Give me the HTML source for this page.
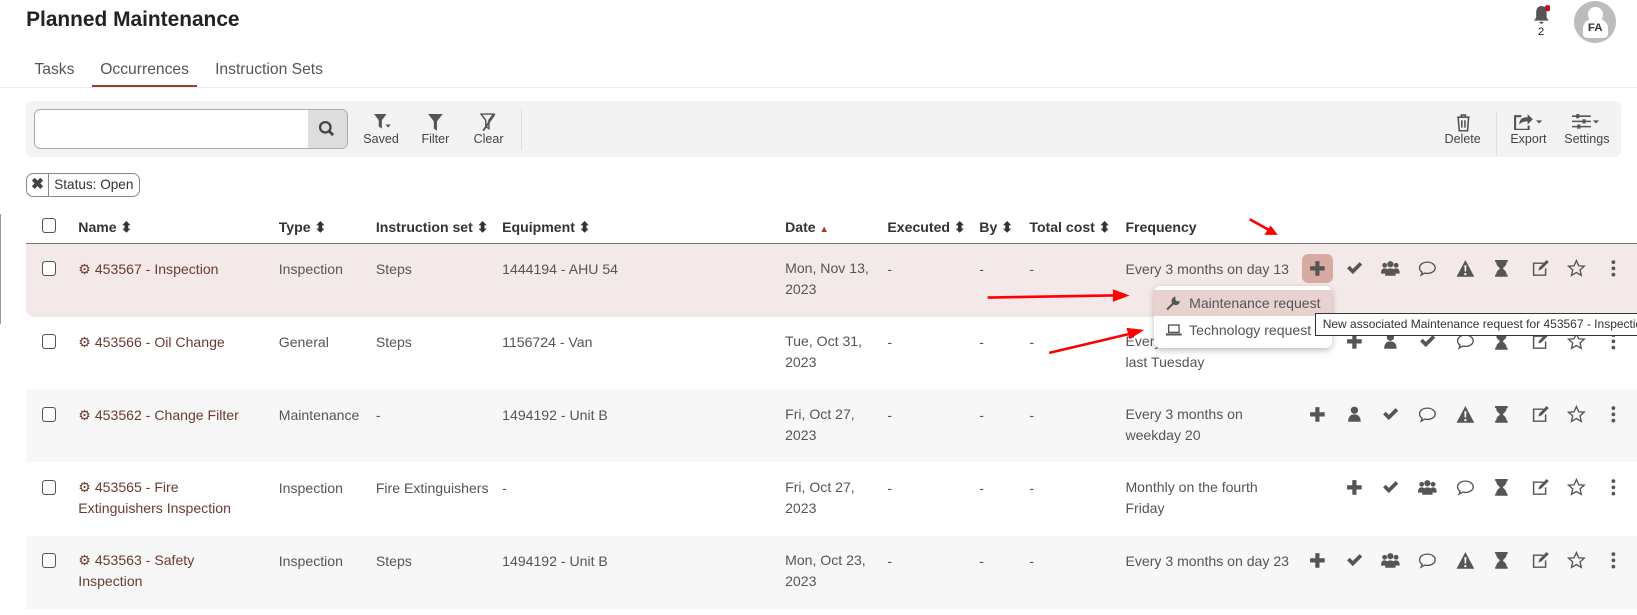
<!DOCTYPE html>
<html><head><meta charset="utf-8"><style>
html{zoom:1.04401}
body{margin:0;width:1568px;height:589px;overflow:hidden;background:#fff;font-family:"Liberation Sans",sans-serif;color:#555;position:relative;font-size:13.5px}
.a{position:absolute;white-space:nowrap}
.h{color:#333;font-weight:bold}
.n{color:#6a3b30}
.row{position:absolute;left:25px;width:1543px;height:70px}
.cb{position:absolute;width:12px;height:12px;border:1.5px solid #555;border-radius:3px;background:#fff}
.ic{position:absolute;width:18px;height:18px;fill:#555;stroke:none}
.tb{position:absolute;text-align:center;font-size:12px;color:#444}
.d{line-height:20px;white-space:normal;width:90px}
</style></head><body>
<div class="a" style="left:25px;top:8px;font-size:20px;font-weight:bold;color:#222">Planned Maintenance</div>
<svg class="ic" style="left:1467px;top:5px;width:18px;height:20px" viewBox="0 0 18 20"><path d="M9 1c-3 0-5 2.5-5 6v5l-2 3h14l-2-3V7c0-3.5-2-6-5-6zM7 16a2 2 0 004 0z" fill="#555"/><circle cx="15" cy="3" r="3" fill="#c0141c"/></svg>
<div class="a" style="left:1473px;top:25px;font-size:11px;color:#222">2</div>
<div class="a" style="left:1508px;top:1px;width:40px;height:40px;border-radius:50%;background:#bcbcbc;overflow:hidden"><div style="position:absolute;left:13px;top:6px;width:14px;height:14px;border-radius:50%;background:#fff"></div><div style="position:absolute;left:8px;top:17px;width:24px;height:18px;border-radius:9px 9px 4px 4px;background:#fff;font-size:11px;font-weight:bold;color:#333;text-align:center;line-height:18px">FA</div></div>
<div class="a" style="left:33px;top:58px;font-size:15px">Tasks</div>
<div class="a" style="left:96px;top:58px;font-size:15px">Occurrences</div>
<div class="a" style="left:206px;top:58px;font-size:15px">Instruction Sets</div>
<div class="a" style="left:0;top:83px;width:1568px;height:1px;background:#eee"></div>
<div class="a" style="left:88px;top:81px;width:101px;height:2px;background:#a33a2c"></div>
<div class="a" style="left:25px;top:97px;width:1528px;height:53px;background:#f3f3f3;border-radius:6px"></div>
<div class="a" style="left:33px;top:104px;width:298px;height:37px;border:1px solid #aaa;border-radius:6px;background:#fff;overflow:hidden"><div style="position:absolute;right:0;top:0;width:37px;height:37px;background:#ddd"><svg style="position:absolute;left:10px;top:10px" width="17" height="17" viewBox="0 0 17 17"><circle cx="7" cy="7" r="5" stroke="#444" stroke-width="2.2" fill="none"/><path d="M10.5 10.5l4 4" stroke="#444" stroke-width="2.6"/></svg></div></div>
<svg class="ic" style="left:357px;top:108px" viewBox="0 0 18 18"><path d="M1 1h12l-4.5 6v8l-3-2V7z"/><path d="M12 11h5l-2.5 3z"/></svg>
<div class="tb" style="left:345px;top:126px;width:40px">Saved</div>
<svg class="ic" style="left:408px;top:108px" viewBox="0 0 18 18"><path d="M2 1h14l-5.5 7v9l-3-2V8z"/></svg>
<div class="tb" style="left:397px;top:126px;width:40px">Filter</div>
<svg class="ic" style="left:459px;top:108px" viewBox="0 0 18 18"><path d="M2 1h12l-4.5 6v8l-3-2V7z" fill="none" stroke="#555" stroke-width="1.4"/><path d="M15 1L4 17" stroke="#555" stroke-width="1.8"/></svg>
<div class="tb" style="left:448px;top:126px;width:40px">Clear</div>
<div class="a" style="left:499px;top:104px;width:1px;height:40px;background:#ddd"></div>
<svg class="ic" style="left:1393px;top:108px" viewBox="0 0 18 18"><path d="M3 4h12M7 4V2h4v2M4 4l1 13h8l1-13M7.5 7v7M10.5 7v7" stroke="#555" stroke-width="1.5" fill="none"/></svg>
<div class="tb" style="left:1381px;top:126px;width:40px">Delete</div>
<div class="a" style="left:1433px;top:108px;width:1px;height:40px;background:#ddd"></div>
<svg class="ic" style="left:1449px;top:107px;width:30px" viewBox="0 0 30 18"><path d="M8 4H2v13h13v-4" stroke="#555" stroke-width="2" fill="none"/><path d="M6 12c0-5 3-7 8-7V2l5 5-5 5V9c-4 0-6 1-8 3z"/><path d="M22 8h6l-3 3z"/></svg>
<div class="tb" style="left:1444px;top:126px;width:40px">Export</div>
<svg class="ic" style="left:1505px;top:107px;width:30px" viewBox="0 0 30 18"><path d="M1 4h18M1 9h18M1 14h18" stroke="#555" stroke-width="1.5"/><rect x="5" y="2" width="3" height="4"/><rect x="11" y="7" width="3" height="4"/><rect x="6" y="12" width="3" height="4"/><path d="M21 8h6l-3 3z"/></svg>
<div class="tb" style="left:1495px;top:126px;width:50px">Settings</div>
<div class="a" style="left:25px;top:166px;width:107px;height:21px;border:1px solid #888;border-radius:7px;background:#fff"><div style="position:absolute;left:0;top:0;width:20px;height:21px;border-right:1px solid #888;text-align:center;font-weight:bold;color:#444;line-height:21px;font-size:15px">✖</div><div style="position:absolute;left:26px;top:3px;font-size:13px;color:#333">Status: Open</div></div>
<div class="a" style="left:0;top:205px;width:1px;height:105px;background:#999"></div>
<div class="cb" style="left:40px;top:209px"></div>
<div class="a h" style="left:75px;top:210px">Name ⬍</div>
<div class="a h" style="left:267px;top:210px">Type ⬍</div>
<div class="a h" style="left:360px;top:210px">Instruction set ⬍</div>
<div class="a h" style="left:481px;top:210px">Equipment ⬍</div>
<div class="a h" style="left:752px;top:210px">Date <span style="color:#a33a2c;font-size:9px">▲</span></div>
<div class="a h" style="left:850px;top:210px">Executed ⬍</div>
<div class="a h" style="left:938px;top:210px">By ⬍</div>
<div class="a h" style="left:986px;top:210px">Total cost ⬍</div>
<div class="a h" style="left:1078px;top:210px">Frequency</div>
<div class="a" style="left:25px;top:233px;width:1543px;height:1px;background:#777"></div>
<div class="row" style="top:234px;background:#f4e9e9;border-radius:0 0 0 8px"></div>
<div class="row" style="top:373px;background:#f7f7f7"></div>
<div class="row" style="top:513px;background:#f7f7f7"></div>
<div class="a" style="left:1247px;top:243px;width:30px;height:28px;border-radius:6px;background:#d7aaa4"></div>
<svg width="0" height="0" style="position:absolute"><defs>
<symbol id="plus" viewBox="0 0 18 18"><path d="M7 2h4v5h5v4h-5v5H7v-5H2V7h5z"/></symbol>
<symbol id="chk" viewBox="0 0 18 18"><path d="M2 9l2.5-2.5L7.5 9.5 14 3l2.5 2.5-9 9z"/></symbol>
<symbol id="grp" viewBox="0 0 18 18"><circle cx="9" cy="5" r="3"/><circle cx="3.5" cy="6" r="2.3"/><circle cx="14.5" cy="6" r="2.3"/><path d="M4 16c0-5 2-7 5-7s5 2 5 7z"/><path d="M0 14c0-4 1.5-5 3.5-5s2.5 1 2.5 1-1 2-1 4zM18 14c0-4-1.5-5-3.5-5S12 10 12 10s1 2 1 4z"/></symbol>
<symbol id="usr" viewBox="0 0 18 18"><circle cx="9" cy="5" r="3.5"/><path d="M3 16c0-5 2.5-7 6-7s6 2 6 7z"/></symbol>
<symbol id="cmt" viewBox="0 0 18 18"><path d="M9 3C4.5 3 1.5 5.5 1.5 8.5c0 1.7 1 3.2 2.5 4.2L3 15.5l3.5-2c.8.2 1.6.3 2.5.3 4.5 0 7.5-2.5 7.5-5.3S13.5 3 9 3z" fill="none" stroke="#555" stroke-width="1.3"/></symbol>
<symbol id="wrn" viewBox="0 0 18 18"><path d="M9 1l8.5 16H.5z"/><path d="M8 6h2l-.3 6H8.3zM8 13.5h2v2H8z" fill="#fff"/></symbol>
<symbol id="hg" viewBox="0 0 18 18"><path d="M3 1h12v2h-1c0 4-3.5 5-3.5 6s3.5 2 3.5 6h1v2H3v-2h1c0-4 3.5-5 3.5-6S4 7 4 3H3z"/></symbol>
<symbol id="edt" viewBox="0 0 18 18"><path d="M12 4H2.5v11.5H14V9" fill="none" stroke="#555" stroke-width="1.4"/><path d="M7 11l1-3 7-7 2 2-7 7z"/></symbol>
<symbol id="str" viewBox="0 0 18 18"><path d="M9 1.5l2.2 5 5.3.4-4 3.5 1.2 5.3L9 13l-4.7 2.7 1.2-5.3-4-3.5 5.3-.4z" fill="none" stroke="#555" stroke-width="1.3"/></symbol>
<symbol id="dot" viewBox="0 0 18 18"><circle cx="9" cy="3" r="1.8"/><circle cx="9" cy="9" r="1.8"/><circle cx="9" cy="15" r="1.8"/></symbol>
</defs></svg>
<!-- rows -->
<div class="cb" style="left:40px;top:250px"></div>
<div class="a n" style="left:75px;top:250px">⚙ 453567 - Inspection</div>
<div class="a" style="left:267px;top:250px">Inspection</div><div class="a" style="left:360px;top:250px">Steps</div><div class="a" style="left:481px;top:250px">1444194 - AHU 54</div>
<div class="a d" style="left:752px;top:247px">Mon, Nov 13, 2023</div>
<div class="a" style="left:850px;top:250px">-</div><div class="a" style="left:938px;top:250px">-</div><div class="a" style="left:986px;top:250px">-</div>
<div class="a" style="left:1078px;top:250px">Every 3 months on day 13</div>

<div class="cb" style="left:40px;top:320px"></div>
<div class="a n" style="left:75px;top:320px">⚙ 453566 - Oil Change</div>
<div class="a" style="left:267px;top:320px">General</div><div class="a" style="left:360px;top:320px">Steps</div><div class="a" style="left:481px;top:320px">1156724 - Van</div>
<div class="a d" style="left:752px;top:317px">Tue, Oct 31, 2023</div>
<div class="a" style="left:850px;top:320px">-</div><div class="a" style="left:938px;top:320px">-</div><div class="a" style="left:986px;top:320px">-</div>
<div class="a" style="left:1078px;top:317px;line-height:20px">Every 3 months on the<br>last Tuesday</div>

<div class="cb" style="left:40px;top:390px"></div>
<div class="a n" style="left:75px;top:390px">⚙ 453562 - Change Filter</div>
<div class="a" style="left:267px;top:390px">Maintenance</div><div class="a" style="left:360px;top:390px">-</div><div class="a" style="left:481px;top:390px">1494192 - Unit B</div>
<div class="a d" style="left:752px;top:387px">Fri, Oct 27, 2023</div>
<div class="a" style="left:850px;top:390px">-</div><div class="a" style="left:938px;top:390px">-</div><div class="a" style="left:986px;top:390px">-</div>
<div class="a" style="left:1078px;top:387px;line-height:20px">Every 3 months on<br>weekday 20</div>

<div class="cb" style="left:40px;top:460px"></div>
<div class="a n" style="left:75px;top:457px;line-height:20px">⚙ 453565 - Fire<br>Extinguishers Inspection</div>
<div class="a" style="left:267px;top:460px">Inspection</div><div class="a" style="left:360px;top:460px">Fire Extinguishers</div><div class="a" style="left:481px;top:460px">-</div>
<div class="a d" style="left:752px;top:457px">Fri, Oct 27, 2023</div>
<div class="a" style="left:850px;top:460px">-</div><div class="a" style="left:938px;top:460px">-</div><div class="a" style="left:986px;top:460px">-</div>
<div class="a" style="left:1078px;top:457px;line-height:20px">Monthly on the fourth<br>Friday</div>

<div class="cb" style="left:40px;top:530px"></div>
<div class="a n" style="left:75px;top:527px;line-height:20px">⚙ 453563 - Safety<br>Inspection</div>
<div class="a" style="left:267px;top:530px">Inspection</div><div class="a" style="left:360px;top:530px">Steps</div><div class="a" style="left:481px;top:530px">1494192 - Unit B</div>
<div class="a d" style="left:752px;top:527px">Mon, Oct 23, 2023</div>
<div class="a" style="left:850px;top:530px">-</div><div class="a" style="left:938px;top:530px">-</div><div class="a" style="left:986px;top:530px">-</div>
<div class="a" style="left:1078px;top:530px">Every 3 months on day 23</div>

<!-- icons -->
<svg class="ic" style="left:1253px;top:248px"><use href="#plus"/></svg><svg class="ic" style="left:1288px;top:248px"><use href="#chk"/></svg><svg class="ic" style="left:1323px;top:248px"><use href="#grp"/></svg><svg class="ic" style="left:1358px;top:248px"><use href="#cmt"/></svg><svg class="ic" style="left:1395px;top:248px"><use href="#wrn"/></svg><svg class="ic" style="left:1429px;top:248px"><use href="#hg"/></svg><svg class="ic" style="left:1466px;top:248px"><use href="#edt"/></svg><svg class="ic" style="left:1501px;top:248px"><use href="#str"/></svg><svg class="ic" style="left:1536px;top:248px"><use href="#dot"/></svg>
<svg class="ic" style="left:1288px;top:318px"><use href="#plus"/></svg><svg class="ic" style="left:1323px;top:318px"><use href="#usr"/></svg><svg class="ic" style="left:1358px;top:318px"><use href="#chk"/></svg><svg class="ic" style="left:1395px;top:318px"><use href="#cmt"/></svg><svg class="ic" style="left:1429px;top:318px"><use href="#hg"/></svg><svg class="ic" style="left:1466px;top:318px"><use href="#edt"/></svg><svg class="ic" style="left:1501px;top:318px"><use href="#str"/></svg><svg class="ic" style="left:1536px;top:318px"><use href="#dot"/></svg>
<svg class="ic" style="left:1253px;top:388px"><use href="#plus"/></svg><svg class="ic" style="left:1288px;top:388px"><use href="#usr"/></svg><svg class="ic" style="left:1323px;top:388px"><use href="#chk"/></svg><svg class="ic" style="left:1358px;top:388px"><use href="#cmt"/></svg><svg class="ic" style="left:1395px;top:388px"><use href="#wrn"/></svg><svg class="ic" style="left:1429px;top:388px"><use href="#hg"/></svg><svg class="ic" style="left:1466px;top:388px"><use href="#edt"/></svg><svg class="ic" style="left:1501px;top:388px"><use href="#str"/></svg><svg class="ic" style="left:1536px;top:388px"><use href="#dot"/></svg>
<svg class="ic" style="left:1288px;top:458px"><use href="#plus"/></svg><svg class="ic" style="left:1323px;top:458px"><use href="#chk"/></svg><svg class="ic" style="left:1358px;top:458px"><use href="#grp"/></svg><svg class="ic" style="left:1395px;top:458px"><use href="#cmt"/></svg><svg class="ic" style="left:1429px;top:458px"><use href="#hg"/></svg><svg class="ic" style="left:1466px;top:458px"><use href="#edt"/></svg><svg class="ic" style="left:1501px;top:458px"><use href="#str"/></svg><svg class="ic" style="left:1536px;top:458px"><use href="#dot"/></svg>
<svg class="ic" style="left:1253px;top:528px"><use href="#plus"/></svg><svg class="ic" style="left:1288px;top:528px"><use href="#chk"/></svg><svg class="ic" style="left:1323px;top:528px"><use href="#grp"/></svg><svg class="ic" style="left:1358px;top:528px"><use href="#cmt"/></svg><svg class="ic" style="left:1395px;top:528px"><use href="#wrn"/></svg><svg class="ic" style="left:1429px;top:528px"><use href="#hg"/></svg><svg class="ic" style="left:1466px;top:528px"><use href="#edt"/></svg><svg class="ic" style="left:1501px;top:528px"><use href="#str"/></svg><svg class="ic" style="left:1536px;top:528px"><use href="#dot"/></svg>
<!-- dropdown -->
<div class="a" style="left:1105px;top:274px;width:171px;height:59px;background:#fff;border-radius:6px;box-shadow:0 2px 6px rgba(0,0,0,.25)">
<div style="position:absolute;left:0;top:4px;width:171px;height:25px;background:#e8d2cf"></div>
<svg style="position:absolute;left:12px;top:10px" width="14" height="14" viewBox="0 0 14 14"><path d="M1 13l6-6M8 2a3 3 0 104 4L10 6 8 4z" stroke="#555" stroke-width="2" fill="#555"/></svg>
<div style="position:absolute;left:34px;top:9px;font-size:13.5px">Maintenance request</div>
<svg style="position:absolute;left:12px;top:36px" width="15" height="12" viewBox="0 0 15 12"><rect x="2.5" y="1" width="10" height="7" fill="none" stroke="#555" stroke-width="1.3"/><path d="M0 10h15" stroke="#555" stroke-width="2"/></svg>
<div style="position:absolute;left:34px;top:34px;font-size:13.5px">Technology request</div></div>
<div class="a" style="left:1260px;top:300px;width:320px;height:20px;border:1px solid #333;background:#fff;font-size:11.5px;color:#333;line-height:20px;padding-left:6px">New associated Maintenance request for 453567 - Inspection</div>
<!-- arrows -->
<svg class="a" style="left:0;top:0" width="1568" height="589"><g stroke="#f00" stroke-width="2.5" fill="#f00"><path d="M1197 210l18 10"/><path d="M1224 225l-13 0 6-9z" stroke="none"/><path d="M946 285l120-2"/><path d="M1082 283l-16-6v12z" stroke="none"/><path d="M1005 338l76-18"/><path d="M1096 316l-17-2 3 11z" stroke="none"/></g></svg>
</body></html>
